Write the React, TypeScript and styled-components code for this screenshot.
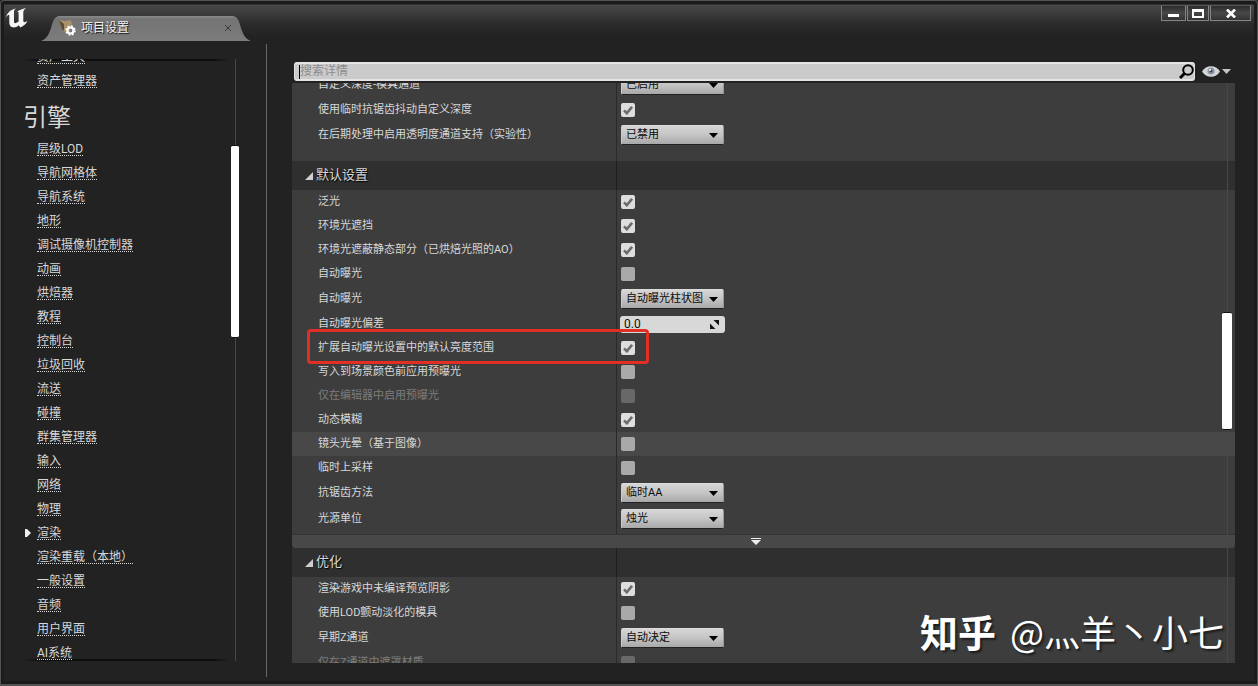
import React from "react";
import styled, { createGlobalStyle } from "styled-components";

const Global = createGlobalStyle`
  *, *::before, *::after { box-sizing: border-box; }
  body {
    margin: 0;
    background: #222;
    color: #d8d8d8;
    font-family: Roboto, "Noto Sans CJK SC", sans-serif;
    font-size: 12px;
  }
  button, input, select { font: inherit; margin: 0; padding: 0; }
`;

const Window = styled.div`
  height: 100vh;
  display: flex;
  flex-direction: column;
  overflow: hidden;
  background: #222;
  border: 1px solid #545454;
  border-bottom-width: 2px;
  border-radius: 4px 4px 0 0;
  box-shadow: inset 0 0 0 3px #1b1b1b;
`;

const TitleBar = styled.header`
  flex: none;
  height: 40px;
  display: flex;
  align-items: flex-start;
  margin: 0 3px;
  background: linear-gradient(#1a1a1a 0 3px, #484848 4px, #3c3c3c 12px, #2a2a2a 24px, #222 36px);
`;

const Logo = styled.svg`
  flex: none;
  width: 24px;
  height: 20px;
  margin: 7px 0 0 1px;
`;

const Tab = styled.div`
  width: 210px;
  height: 25px;
  margin: 15px 0 0 12px;
  padding: 0 20px 2px 18px;
  display: flex;
  align-items: center;
  gap: 5px;
  background: linear-gradient(#8a8a8a, #747474 3px, #7c7c7c);
  clip-path: path("M0 25 C6 23 8 18 10 12 C12 5 13 0 19 0 H191 C197 0 198 5 200 12 C202 18 204 23 210 25 Z");
  color: #f0f0f0;
  text-shadow: 1px 1px 1px #111;
`;

const TabTitle = styled.h1`
  flex: 1;
  margin: 0;
  font-size: 12px;
  font-weight: 400;
  line-height: 20px;
`;

const TabClose = styled.button`
  display: flex;
  border: 0;
  background: none;
`;

const WindowControls = styled.div`
  display: flex;
  gap: 1px;
  margin: 4px 3px 0 auto;
`;

const ControlButton = styled.button<{ $w: number }>`
  width: ${(p) => p.$w}px;
  height: 16px;
  display: grid;
  place-items: center;
  border: 1px solid #858585;
  border-top-color: #555;
  background: linear-gradient(#2c2c2c, #484848 50%, #333);
`;

const Body = styled.div`
  flex: 1;
  min-height: 0;
  display: flex;
`;

const Sidebar = styled.nav`
  flex: none;
  width: 266px;
  margin: 3px 0 7px;
  padding: 15px 27px 16px 22px;
  border-right: 1px solid #696969;
  display: flex;
`;

const SidebarView = styled.div`
  flex: 1;
  overflow: hidden;
  position: relative;
  &::before, &::after {
    content: "";
    position: absolute;
    left: 0;
    right: 2px;
    height: 2px;
    background: linear-gradient(90deg, transparent, #0c0c0c 8%, #0c0c0c 92%, transparent);
  }
  &::before { top: 0; }
  &::after { bottom: 0; }
`;

const SidebarContent = styled.div`
  position: relative;
  z-index: 1;
  margin-top: -15px;
`;

const TrackLine = styled.div`
  width: 1px;
  height: 100%;
  margin: 0 auto;
  background: #484848;
`;

const Thumb = styled.div<{ $top: number; $height: number }>`
  position: absolute;
  left: 0;
  right: 0;
  top: ${(p) => p.$top}%;
  height: ${(p) => p.$height}%;
  background: #fff;
  border: 1px solid #111;
  border-width: 1px 0;
  border-radius: 2px;
`;

const SideTrack = styled.div`
  flex: none;
  position: relative;
  width: 8px;
`;

const NavList = styled.ul`
  list-style: none;
  margin: 0;
  padding: 0;
`;

const NavItem = styled.li`
  height: 24px;
  display: flex;
  align-items: flex-start;
  padding-top: 7px;
`;

const NavMarker = styled.span`
  width: 14px;
  height: 12px;
  display: flex;
  align-items: center;
  padding-left: 2px;
`;

const NavLink = styled.a`
  color: #d8d8d8;
  text-decoration: none;
  line-height: 12px;
  border-bottom: 1px dotted #d8d8d8;
`;

const NavHeading = styled.h2`
  margin: 0;
  height: 44px;
  font-size: 24px;
  font-weight: 400;
  line-height: 52px;
`;

const Main = styled.main`
  flex: 1;
  min-width: 0;
  display: flex;
  flex-direction: column;
  padding: 21px 22px 21px 25px;
`;

const SearchRow = styled.div`
  display: flex;
  align-items: center;
  gap: 7px;
  padding: 0 4px 0 2px;
  margin-bottom: 2px;
`;

const SearchBox = styled.label`
  flex: 1;
  height: 19px;
  display: flex;
  align-items: center;
  padding: 0 0 0 4px;
  border: 1px solid #e4e4e4;
  border-width: 2px 1px;
  border-radius: 3px;
  background: #cbcbcb;
`;

const Caret = styled.span`
  width: 1px;
  height: 14px;
  background: #000;
`;

const SearchInput = styled.input`
  flex: 1;
  min-width: 0;
  height: 15px;
  padding-bottom: 2px;
  border: 0;
  outline: 0;
  background: none;
  color: #222;
  &::placeholder { color: #8d8d8d; opacity: 1; }
`;

const ViewButton = styled.button`
  display: flex;
  align-items: center;
  gap: 2px;
  border: 0;
  background: none;
`;

const Details = styled.div`
  flex: 1;
  min-height: 0;
  overflow: hidden;
  position: relative;
  background: #3d3d3d;
`;

const DetailsContent = styled.div`
  margin-top: -11px;
`;

const DetailsTrack = styled.div`
  position: absolute;
  top: 0;
  bottom: 0;
  right: 3px;
  width: 10px;
`;

const SectionHeader = styled.h3`
  margin: 0;
  height: 29px;
  display: grid;
  grid-template-columns: 325px 1fr;
  background: #2f2f2f;
  font-size: 13px;
  font-weight: 400;
  text-shadow: 1px 1px 1px #000;
`;

const HeaderTitle = styled.span`
  display: flex;
  align-items: center;
  gap: 3px;
  padding: 0 0 2px 13px;
  border-right: 1px solid #1f1f1f;
  line-height: 20px;
  > svg { margin-top: 2px; }
`;

const Row = styled.div<{ $h: number; $hover?: boolean }>`
  position: relative;
  height: ${(p) => p.$h}px;
  display: grid;
  grid-template-columns: 325px 1fr;
  background: ${(p) => (p.$hover ? "#484848" : "transparent")};
`;

const RowLabel = styled.label<{ $dim?: boolean }>`
  display: flex;
  align-items: center;
  padding-left: 26px;
  border-right: 1px solid #2a2a2a;
  font-size: 11px;
  line-height: 16px;
  white-space: nowrap;
  color: ${(p) => (p.$dim ? "#7c7c7c" : "#d8d8d8")};
`;

const Cell = styled.div`
  display: flex;
  align-items: center;
  padding-left: 3px;
`;

const RowSpacer = styled.div<{ $h: number }>`
  height: ${(p) => p.$h}px;
  width: 325px;
  border-right: 1px solid #2a2a2a;
`;

const Highlight = styled.div`
  position: absolute;
  z-index: 1;
  left: 15px;
  top: -7px;
  width: 342px;
  height: 35px;
  border: 3px solid #e22f26;
  border-radius: 4px;
  pointer-events: none;
`;

const Stack = styled.span`
  display: grid;
  align-items: center;
  > * { grid-area: 1 / 1; }
  > svg { pointer-events: none; }
`;

const CheckInput = styled.input`
  appearance: none;
  width: 14px;
  height: 14px;
  margin-left: 1px;
  border-radius: 2px;
  background: #a9a9a9;
  &:checked { background: #dedede; }
  &:disabled { background: #686868; }
`;

const CheckMark = styled.svg`
  width: 10px;
  height: 10px;
  margin-left: 3px;
`;

const Select = styled.select`
  appearance: none;
  width: 103px;
  height: 20px;
  margin-left: 1px;
  padding-left: 4px;
  border: 1px solid #222;
  border-color: #ddd #999 #222 #ccc;
  border-radius: 2px;
  background: linear-gradient(#d6d6d6, #c4c4c4 50%, #a8a8a8);
  color: #0a0a0a;
  font-size: 11px;
  line-height: 16px;
`;

const SelectArrow = styled.svg`
  justify-self: end;
  width: 9px;
  height: 5px;
  margin-right: 6px;
`;

const NumberInput = styled.input`
  width: 105px;
  height: 17px;
  padding: 0 0 1px 4px;
  border: 0;
  border-radius: 3px;
  background: #d8d8d8;
  color: #111;
  font-size: 12px;
`;

const SpinIcon = styled.svg`
  justify-self: end;
  width: 9px;
  height: 9px;
  margin-right: 6px;
`;

const ExpandBar = styled.button`
  width: 100%;
  height: 14px;
  display: grid;
  place-items: center;
  padding: 0 15px 1px 0;
  border: 0;
  border-top: 1px solid #343434;
  border-radius: 0 0 4px 4px;
  background: #484848;
`;

const ExpandWrap = styled.div`
  display: flex;
  background: #2f2f2f;
`;

const Watermark = styled.div`
  position: absolute;
  right: 34px;
  bottom: 29px;
  z-index: 2;
  display: flex;
  align-items: center;
  gap: 14px;
  color: #fff;
  font-family: "Noto Sans CJK SC", sans-serif;
  font-size: 36px;
  line-height: 52px;
  white-space: nowrap;
  text-shadow: 2px 2px 2px rgba(0, 0, 0, 0.55);
`;

const Brand = styled.strong`
  font-size: 38px;
  font-weight: 700;
`;

type RowSpec =
  | { kind: "check"; label: string; on?: boolean; dim?: boolean; hover?: boolean; marked?: boolean }
  | { kind: "select"; label: string; value: string }
  | { kind: "number"; label: string; value: string };

const topRows: RowSpec[] = [
  { kind: "select", label: "自定义深度-模具通道", value: "已启用" },
  { kind: "check", label: "使用临时抗锯齿抖动自定义深度", on: true },
  { kind: "select", label: "在后期处理中启用透明度通道支持（实验性）", value: "已禁用" },
];

const defaultRows: RowSpec[] = [
  { kind: "check", label: "泛光", on: true },
  { kind: "check", label: "环境光遮挡", on: true },
  { kind: "check", label: "环境光遮蔽静态部分（已烘焙光照的AO）", on: true },
  { kind: "check", label: "自动曝光" },
  { kind: "select", label: "自动曝光", value: "自动曝光柱状图" },
  { kind: "number", label: "自动曝光偏差", value: "0.0" },
  { kind: "check", label: "扩展自动曝光设置中的默认亮度范围", on: true, marked: true },
  { kind: "check", label: "写入到场景颜色前应用预曝光" },
  { kind: "check", label: "仅在编辑器中启用预曝光", dim: true },
  { kind: "check", label: "动态模糊", on: true },
  { kind: "check", label: "镜头光晕（基于图像）", hover: true },
  { kind: "check", label: "临时上采样" },
  { kind: "select", label: "抗锯齿方法", value: "临时AA" },
  { kind: "select", label: "光源单位", value: "烛光" },
];

const optimizeRows: RowSpec[] = [
  { kind: "check", label: "渲染游戏中未编译预览阴影", on: true },
  { kind: "check", label: "使用LOD颤动淡化的模具" },
  { kind: "select", label: "早期Z通道", value: "自动决定" },
  { kind: "check", label: "仅在Z通道中遮罩材质", dim: true },
];

const engineLinks = [
  "层级LOD", "导航网格体", "导航系统", "地形", "调试摄像机控制器", "动画", "烘焙器", "教程",
  "控制台", "垃圾回收", "流送", "碰撞", "群集管理器", "输入", "网络", "物理", "渲染",
  "渲染重载（本地）", "一般设置", "音频", "用户界面", "AI系统",
];

function PropertyRow({ spec, id }: { spec: RowSpec; id: string }) {
  const check = spec.kind === "check" ? spec : null;
  return (
    <Row $h={spec.kind === "select" ? 26 : 24} $hover={check?.hover}>
      <RowLabel htmlFor={id} $dim={check?.dim}>{spec.label}</RowLabel>
      <Cell>
        <Stack>
          {check && <CheckInput id={id} type="checkbox" defaultChecked={check.on} disabled={check.dim} />}
          {check?.on && (
            <CheckMark viewBox="0 0 10 10">
              <path d="M1 5.4 3.8 8.2 9 1.8" fill="none" stroke="#6c6c6c" strokeWidth="2.6" />
            </CheckMark>
          )}
          {spec.kind === "select" && (
            <>
              <Select id={id} defaultValue={spec.value}>
                <option>{spec.value}</option>
              </Select>
              <SelectArrow viewBox="0 0 9 5"><path d="M0 0H9L4.5 5Z" fill="#000" /></SelectArrow>
            </>
          )}
          {spec.kind === "number" && (
            <>
              <NumberInput id={id} defaultValue={spec.value} />
              <SpinIcon viewBox="0 0 9 9">
                <path d="M3.5 0H9V5.5ZM0 3.5V9H5.5Z" fill="#111" />
              </SpinIcon>
            </>
          )}
        </Stack>
      </Cell>
      {check?.marked && <Highlight />}
    </Row>
  );
}

function Rows({ name, rows }: { name: string; rows: RowSpec[] }) {
  return <>{rows.map((r, i) => <PropertyRow key={i} id={`${name}-${i}`} spec={r} />)}</>;
}

function Header({ children }: { children: string }) {
  return (
    <SectionHeader>
      <HeaderTitle>
        <svg width="8" height="8" viewBox="0 0 8 8"><path d="M8 0V8H0Z" fill="#cfcfcf" /></svg>
        {children}
      </HeaderTitle>
    </SectionHeader>
  );
}

function NavEntry({ text }: { text: string }) {
  return (
    <NavItem>
      <NavMarker>
        {text === "渲染" && (
          <svg width="6" height="10" viewBox="0 0 6 10"><path d="M0 1H2L6 5 2 9H0Z" fill="#eee" /></svg>
        )}
      </NavMarker>
      <NavLink href="#">{text}</NavLink>
    </NavItem>
  );
}

export default function App() {
  return (
    <>
      <Global />
      <Window>
        <TitleBar>
          <Logo viewBox="0 0 24 20">
            <path
              d="M1 9.5C2 5 5.5 1.5 11 .5 9.5 1.6 9 2.5 9 4V13.5C9 15.2 10 15.6 11.5 14.8L13.6 13.4V5C13.6 4 13 3.6 12 3.8 14.5 1.8 17.5 .8 21 0 19 1.8 18.3 3 18.3 4.5V12.5C18.3 14.5 19.5 15 22.5 12.8 21.3 16 18.5 18 15.3 19.5L13.8 17.2C11.8 19 9.5 19.8 7.5 19.3 5.2 18.7 4.3 17 4.3 14.5V7.5C4.3 6 2.5 7 1 9.5Z"
              fill="#f6f6f6"
            />
          </Logo>
          <Tab>
            <svg width="17" height="17" viewBox="0 0 17 17">
              <path d="M0 1 6 2 12 1 13 5 10 15 4 12Z" fill="#a8916a" />
              <path d="M0 1 5 5 5 12 3 10Z" fill="#5d4c33" />
              <circle cx="11.5" cy="11.5" r="3" fill="none" stroke="#fff" strokeWidth="2.2" />
              <circle cx="11.5" cy="11.5" r="4.4" fill="none" stroke="#fff" strokeWidth="1.6" strokeDasharray="1.8 1.66" />
            </svg>
            <TabTitle>项目设置</TabTitle>
            <TabClose aria-label="关闭标签">
              <svg width="6" height="6" viewBox="0 0 6 6"><path d="M0 0 6 6M6 0 0 6" stroke="#3a3a3a" /></svg>
            </TabClose>
          </Tab>
          <WindowControls>
            <ControlButton $w={25} aria-label="最小化">
              <svg width="11" height="11" viewBox="0 0 11 11"><path d="M0 6H11V9H0Z" fill="#fff" /></svg>
            </ControlButton>
            <ControlButton $w={22} aria-label="最大化">
              <svg width="12" height="9" viewBox="0 0 12 9"><path d="M0 0H12V9H0ZM2 3V7H10V3Z" fill="#fff" fillRule="evenodd" /></svg>
            </ControlButton>
            <ControlButton $w={41} aria-label="关闭">
              <svg width="10" height="9" viewBox="0 0 10 9"><path d="M1 .5 9 8.5M9 .5 1 8.5" stroke="#fff" strokeWidth="2.6" /></svg>
            </ControlButton>
          </WindowControls>
        </TitleBar>
        <Body>
          <Sidebar>
            <SidebarView>
              <SidebarContent>
                <NavList>
                  <NavEntry text="资产工具" />
                  <NavEntry text="资产管理器" />
                </NavList>
                <NavHeading>引擎</NavHeading>
                <NavList>{engineLinks.map((t) => <NavEntry key={t} text={t} />)}</NavList>
              </SidebarContent>
            </SidebarView>
            <SideTrack>
              <TrackLine />
              <Thumb $top={14.3} $height={32} />
            </SideTrack>
          </Sidebar>
          <Main>
            <SearchRow>
              <SearchBox>
                <Caret />
                <SearchInput placeholder="搜索详情" aria-label="搜索详情" />
                <svg width="15" height="15" viewBox="0 0 15 15">
                  <circle cx="9" cy="6" r="4.8" fill="none" stroke="#000" strokeWidth="2" />
                  <path d="M5.5 9.5 1 14" stroke="#000" strokeWidth="3" />
                </svg>
              </SearchBox>
              <ViewButton aria-label="视图选项">
                <svg width="18" height="11" viewBox="0 0 18 11">
                  <path d="M0 5.5C4-1.5 14-1.5 18 5.5 14 12.5 4 12.5 0 5.5Z" fill="#d4d6da" />
                  <circle cx="9" cy="5" r="3.6" fill="#8f97a4" />
                  <circle cx="9" cy="5" r="1.5" fill="#3c424c" />
                  <circle cx="8" cy="4" r="1" fill="#fff" />
                </svg>
                <svg width="9" height="5" viewBox="0 0 9 5"><path d="M0 0H9L4.5 5Z" fill="#c4c4c4" /></svg>
              </ViewButton>
            </SearchRow>
            <Details>
              <DetailsContent>
                <Rows name="top" rows={topRows} />
                <RowSpacer $h={13} />
                <Header>默认设置</Header>
                <Rows name="default" rows={defaultRows} />
                <RowSpacer $h={2} />
                <ExpandWrap>
                  <ExpandBar aria-label="展开">
                    <svg width="10" height="7" viewBox="0 0 10 7">
                      <path d="M0 0H10V1H0ZM0 2H10L5 7Z" fill="#eee" />
                    </svg>
                  </ExpandBar>
                </ExpandWrap>
                <Header>优化</Header>
                <Rows name="optimize" rows={optimizeRows} />
              </DetailsContent>
              <DetailsTrack>
                <TrackLine />
                <Thumb $top={39.4} $height={20.5} />
              </DetailsTrack>
            </Details>
          </Main>
        </Body>
        <Watermark>
          <Brand>知乎</Brand>
          <span>@灬羊丶小七</span>
        </Watermark>
      </Window>
    </>
  );
}
